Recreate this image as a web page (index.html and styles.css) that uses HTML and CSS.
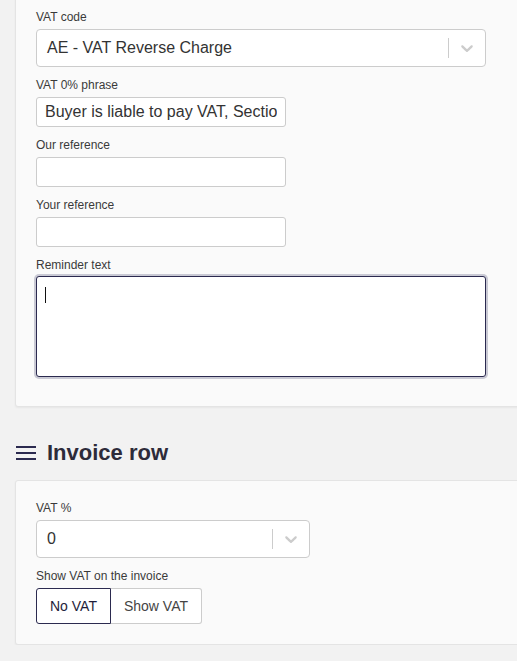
FILE: index.html
```html
<!DOCTYPE html>
<html lang="en">
<head>
<meta charset="utf-8">
<title>Invoice settings</title>
<link rel="stylesheet" href="styles.css">
</head>
<body>
<div class="page">
  <section class="card card-top">
    <div class="field">
      <label class="label">VAT code</label>
      <div class="select select-wide">
        <div class="select-value">AE - VAT Reverse Charge</div>
        <span class="select-sep"></span>
        <span class="select-ind">
          <svg viewBox="0 0 20 20" width="20" height="20" aria-hidden="true"><path d="M4.516 7.548c0.436-0.446 1.043-0.481 1.576 0l3.908 3.747 3.908-3.747c0.533-0.481 1.141-0.446 1.574 0 0.436 0.445 0.408 1.197 0 1.615-0.406 0.418-4.695 4.502-4.695 4.502-0.217 0.223-0.502 0.335-0.787 0.335s-0.57-0.112-0.789-0.335c0 0-4.287-4.084-4.695-4.502s-0.436-1.170 0-1.615z"/></svg>
        </span>
      </div>
    </div>
    <div class="field">
      <label class="label">VAT 0% phrase</label>
      <input class="input" type="text" value="Buyer is liable to pay VAT, Section 8c of the VAT Act">
    </div>
    <div class="field">
      <label class="label">Our reference</label>
      <input class="input" type="text" value="">
    </div>
    <div class="field">
      <label class="label">Your reference</label>
      <input class="input" type="text" value="">
    </div>
    <div class="field">
      <label class="label">Reminder text</label>
      <div class="textarea-wrap">
        <textarea class="textarea"></textarea>
        <span class="caret"></span>
      </div>
    </div>
  </section>

  <h2 class="heading">
    <svg class="burger" viewBox="0 0 20 16" width="20" height="16" aria-hidden="true">
      <rect x="0" y="1" width="20" height="2"/>
      <rect x="0" y="7" width="20" height="2"/>
      <rect x="0" y="13" width="20" height="2"/>
    </svg>
    <span>Invoice row</span>
  </h2>

  <section class="card">
    <div class="field">
      <label class="label">VAT %</label>
      <div class="select select-mid">
        <div class="select-value">0</div>
        <span class="select-sep"></span>
        <span class="select-ind">
          <svg viewBox="0 0 20 20" width="20" height="20" aria-hidden="true"><path d="M4.516 7.548c0.436-0.446 1.043-0.481 1.576 0l3.908 3.747 3.908-3.747c0.533-0.481 1.141-0.446 1.574 0 0.436 0.445 0.408 1.197 0 1.615-0.406 0.418-4.695 4.502-4.695 4.502-0.217 0.223-0.502 0.335-0.787 0.335s-0.57-0.112-0.789-0.335c0 0-4.287-4.084-4.695-4.502s-0.436-1.170 0-1.615z"/></svg>
        </span>
      </div>
    </div>
    <div class="field">
      <label class="label">Show VAT on the invoice</label>
      <div class="btn-group">
        <button class="btn btn-active" type="button">No VAT</button>
        <button class="btn" type="button">Show VAT</button>
      </div>
    </div>
  </section>
</div>
</body>
</html>
```

FILE: styles.css
```css
html, body {
  margin: 0;
  padding: 0;
}
body {
  background: #f2f2f2;
  font-family: "Liberation Sans", Arial, sans-serif;
  color: #333;
  overflow: hidden;
}
.page {
  padding-left: 15px;
  width: 540px;
}
.card {
  background: #fafafa;
  border: 1px solid #e4e4e4;
  border-radius: 3px;
  box-shadow: 0 1px 2px rgba(0, 0, 0, 0.05);
  padding: 19px 20px 10px 20px;
}
.card-top {
  margin-top: -11px;
}
.field {
  display: flex;
  flex-direction: column;
  align-items: flex-start;
  margin-bottom: 10px;
}
.label {
  font-size: 12px;
  line-height: 16px;
  color: #3a3a3a;
  margin-bottom: 4px;
}
.select {
  box-sizing: border-box;
  height: 38px;
  display: flex;
  align-items: center;
  background: #fff;
  border: 1px solid #cccccc;
  border-radius: 4px;
}
.select-wide { width: 450px; }
.select-mid { width: 274px; }
.select-value {
  flex: 1;
  padding-left: 10px;
  font-size: 16px;
  color: #333;
  white-space: nowrap;
  overflow: hidden;
}
.select-sep {
  align-self: stretch;
  width: 1px;
  margin: 8px 0;
  background: #cccccc;
}
.select-ind {
  display: flex;
  padding: 8px;
}
.select-ind svg {
  fill: #cccccc;
}
.input {
  box-sizing: border-box;
  width: 250px;
  height: 30px;
  padding: 0 8px;
  border: 1px solid #cccccc;
  border-radius: 3px;
  background: #fff;
  font-family: "Liberation Sans", Arial, sans-serif;
  font-size: 16px;
  color: #333;
  outline: none;
}
.textarea-wrap {
  position: relative;
  margin-top: -1px;
  margin-bottom: 9px;
}
.textarea {
  display: block;
  box-sizing: border-box;
  width: 450px;
  height: 101px;
  border: 1px solid #2b2a4f;
  border-radius: 3px;
  box-shadow: 0 0 0 2px #c9c9d4;
  background: #fff;
  resize: none;
  outline: none;
  font-family: "Liberation Sans", Arial, sans-serif;
  font-size: 14px;
  padding: 8px;
}
.caret {
  position: absolute;
  left: 9px;
  top: 11px;
  width: 1px;
  height: 16px;
  background: #111;
}
.heading {
  display: flex;
  align-items: center;
  gap: 11px;
  margin: 31px 0 12px 1px;
  height: 30px;
  font-size: 22px;
  font-weight: bold;
  color: #2d2b3a;
}
.burger {
  fill: #2b2a4f;
  flex: none;
}
.btn-group {
  display: flex;
}
.btn {
  box-sizing: border-box;
  height: 36px;
  padding: 0 13px;
  font-family: "Liberation Sans", Arial, sans-serif;
  font-size: 14px;
  color: #444;
  background: #fff;
  border: 1px solid #cccccc;
  border-left: none;
  border-radius: 0 3px 3px 0;
  cursor: pointer;
}
.btn-active {
  color: #1e1d3a;
  border: 1px solid #2b2a4f;
  border-radius: 3px 0 0 3px;
}
```
